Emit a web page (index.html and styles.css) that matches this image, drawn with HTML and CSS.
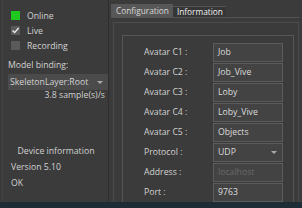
FILE: index.html
```
<!DOCTYPE html>
<html>
<head>
<meta charset="utf-8">
<link rel="stylesheet" href="styles.css">
</head>
<body>
<div class="app">
  <div class="main">
    <div class="left">
      <div class="status-row"><span class="led"></span><span>Online</span></div>
      <div class="status-row"><span class="check checked"><svg width="9" height="9" viewBox="0 0 9 9"><path d="M1.5 4.6 L3.6 6.6 L7.6 2" fill="none" stroke="#eee" stroke-width="1.4"/></svg></span><span>Live</span></div>
      <div class="status-row"><span class="check"></span><span>Recording</span></div>
      <div class="label-binding">Model binding:</div>
      <div class="combo left-combo"><span>SkeletonLayer:Root</span><span class="arrow"></span></div>
      <div class="rate">3.8 sample(s)/s</div>
      <div class="device">
        <div class="device-title">Device information</div>
        <div class="device-line">Version 5.10</div>
        <div class="device-line">OK</div>
      </div>
    </div>
    <div class="right">
      <div class="tabs">
        <div class="tab active">Configuration</div>
        <div class="tab">Information</div>
        <div class="tab-fill"></div>
      </div>
      <div class="pane">
        <div class="group">
          <div class="form">
            <div class="lbl">Avatar C1 :</div><div class="field">Job</div>
            <div class="lbl">Avatar C2 :</div><div class="field">Job_Vive</div>
            <div class="lbl">Avatar C3 :</div><div class="field">Loby</div>
            <div class="lbl">Avatar C4 :</div><div class="field">Loby_Vive</div>
            <div class="lbl">Avatar C5 :</div><div class="field">Objects</div>
            <div class="lbl">Protocol :</div><div class="field combo-field"><span>UDP</span><span class="arrow"></span></div>
            <div class="lbl">Address :</div><div class="field disabled">localhost</div>
            <div class="lbl">Port :</div><div class="field">9763</div>
          </div>
        </div>
      </div>
    </div>
  </div>
  <div class="statusbar"></div>
</div>
</body>
</html>
```

FILE: styles.css
```
* { box-sizing: border-box; }
html, body { margin: 0; padding: 0; }
body {
  width: 302px; height: 208px; overflow: hidden;
  background: #3b3b3b;
  font-family: "Open Sans", "DejaVu Sans", sans-serif;
  font-size: 8.7px;
  color: #d2d2d2;
}
.app { display: flex; flex-direction: column; height: 208px; }
.main { display: flex; height: 202px; }
.statusbar { height: 6px; background: #1e2c36; }

.left {
  width: 107px; flex: none;
  border-left: 1px solid #444;
  margin-left: 2px;
  border-right: 1px solid #2e2e2e;
  display: flex; flex-direction: column;
  padding: 8px 0 0 5px;
}
.status-row { display: flex; align-items: center; height: 15px; gap: 7px; padding-left: 3px; }
.led { width: 9px; height: 9px; background: #1ec81e; flex: none; }
.check { width: 9px; height: 9px; background: #5a5a5a; flex: none; display: flex; }
.label-binding { margin-top: 6px; height: 12px; line-height: 12px; }
.combo {
  display: flex; align-items: center; justify-content: space-between;
  background: #4b4b4b;
}
.left-combo { margin-top: 3px; height: 16px; padding: 0 5px 0 2px; }
.arrow { width: 0; height: 0; border-left: 3px solid transparent; border-right: 3px solid transparent; border-top: 3px solid #aaa; }
.rate { text-align: right; margin-top: 0; height: 11px; line-height: 11px; padding-right: 3px; }
.device { margin-top: 44px; display: flex; flex-direction: column; }
.device-title { text-align: center; height: 12px; line-height: 12px; padding-right: 4px; }
.device-line { margin-top: 4px; height: 12px; line-height: 12px; padding-left: 3px; }

.right { flex: 1; display: flex; flex-direction: column; padding: 4px 3px 0 2px; }
.tabs { display: flex; align-items: flex-end; height: 14px; border-bottom: 1px solid #555; font-size: 8.3px; }
.tab { height: 11px; line-height: 10px; padding: 0 3px 0 4px; background: #363636; color: #f0f0f0; border-top: 1px solid #555; }
.tab.active { height: 13px; line-height: 13px; background: #575757; color: #d8d8d8; border-top: none; padding: 0 4px 0 5px; }
.tab-fill { flex: 1; }
.pane { flex: 1; margin-top: 4px; border: 1px solid #4c4c4c; border-bottom: none; padding: 12px 4px 0 8px; margin-left: 2px; }
.group { border: 1px solid #555; border-bottom: none; height: 100%; padding: 7px 10px 0 21px; }
.form { display: grid; grid-template-columns: 69px 1fr; row-gap: 1px; }
.lbl { height: 19px; line-height: 19px; }
.field { height: 19px; line-height: 17px; border: 1px solid #5c5c5c; background: #434343; padding: 0 4px; color: #dcdcdc; }
.combo-field { display: flex; align-items: center; justify-content: space-between; padding-right: 5px; }
.disabled { color: #6a6a6a; }
```
